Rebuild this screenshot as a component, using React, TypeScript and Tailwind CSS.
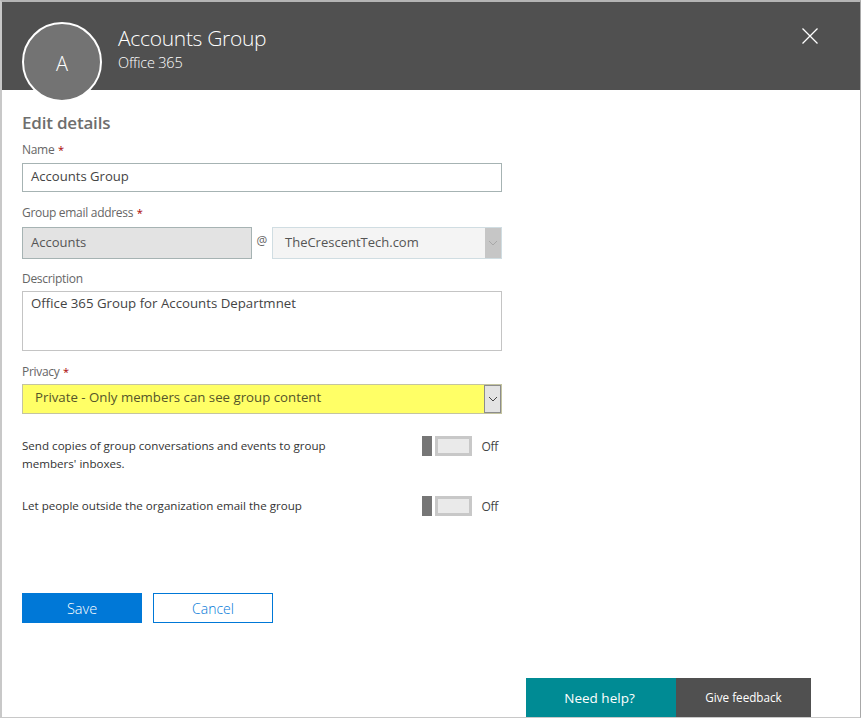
import React from "react";

function Label({ children, req }: { children: React.ReactNode; req?: boolean }) {
  return (
    <div className="text-[12px] leading-[16px] tracking-[-0.3px] text-[#666666]">
      {children}
      {req && <span className="ml-[1px] text-[#a80000] text-[11px]"> *</span>}
    </div>
  );
}

function Chevron({ color }: { color: string }) {
  return (
    <svg width="10" height="6" viewBox="0 0 10 6" fill="none">
      <path d="M1 1l4 4 4-4" stroke={color} strokeWidth="1" />
    </svg>
  );
}

function Toggle() {
  return (
    <div className="flex items-center mr-[4px]">
      <div className="w-[10px] h-[20px] bg-[#767676]" />
      <div className="ml-[3px] w-[37px] h-[20px] border-[3px] border-[#c8c8c8] bg-[#eaeaea]" />
      <span className="ml-[9px] h-[20px] leading-[22px] text-[12px] tracking-[-0.3px] text-[#444444]">Off</span>
    </div>
  );
}

export default function App() {
  return (
    <div className="w-[861px] h-[718px] bg-white overflow-hidden border-t-2 border-t-[#b4b4b4] border-l-2 border-l-[#c8c8c8] border-r border-r-[#a8a8a8] border-b border-b-[#c8c8c8] flex flex-col font-['Open_Sans','Noto_Sans',sans-serif]">
      <header className="h-[88px] shrink-0 bg-[#505050] flex items-start pl-[20px] pr-[42px] text-white">
        <div className="mt-[20px] w-[80px] h-[80px] shrink-0 rounded-full border-2 border-white bg-[#737373] flex items-center justify-center pt-[3px] text-[20px] font-light relative z-10">
          A
        </div>
        <div className="ml-[16px] mt-[21px] flex-1">
          <div className="text-[21px] leading-[30px] font-light tracking-[-0.3px]">Accounts Group</div>
          <div className="mt-[1px] text-[14.5px] leading-[18px] font-light tracking-[-0.2px]">Office 365</div>
        </div>
        <svg className="mt-[26px]" width="16" height="16" viewBox="0 0 16 16" fill="none">
          <path d="M0.5 0.5l15 15M15.5 0.5l-15 15" stroke="#ffffff" strokeWidth="1.3" />
        </svg>
      </header>

      <main className="flex-1 flex flex-col pl-[20px] relative">
        <form className="w-[480px] flex flex-col">
          <h1 className="mt-[21px] text-[17px] leading-[24px] font-semibold text-[#6e6e6e] tracking-[-0.2px]">Edit details</h1>

          <div className="mt-[7px]"><Label req>Name</Label></div>
          <div className="mt-[5px] h-[29px] border border-[#a6b3b3] pl-[8px] pb-[2px] flex items-center text-[13.1px] text-[#444444]">
            Accounts Group
          </div>

          <div className="mt-[13px]"><Label req>Group email address</Label></div>
          <div className="mt-[6px] flex h-[32px]">
            <div className="w-[230px] bg-[#e3e3e3] border border-[#a6b3b3] pl-[8px] flex items-center text-[13px] text-[#555555]">
              Accounts
            </div>
            <div className="w-[20px] text-center text-[12px] leading-[28px] text-[#666666]">@</div>
            <div className="flex-1 bg-[#f4f4f4] border border-[#d0dde2] pl-[12px] flex items-center justify-between text-[13px] text-[#555555]">
              TheCrescentTech.com
              <div className="w-[16px] h-[30px] bg-[#c6c6c6] flex items-center justify-center">
                <Chevron color="#a8a8a8" />
              </div>
            </div>
          </div>

          <div className="mt-[12px]"><Label>Description</Label></div>
          <div className="mt-[4px] h-[60px] border border-[#c4c4c4] pl-[8px] pt-[2px] text-[13.25px] leading-[18px] text-[#444444]">
            Office 365 Group for Accounts Departmnet
          </div>

          <div className="mt-[13px]"><Label req>Privacy</Label></div>
          <div className="mt-[4px] h-[30px] bg-[#ffff66] border border-[#c4c4a0] pl-[12px] flex items-center justify-between text-[13.25px] text-[#55552a]">
            <span className="pb-[2px]">Private - Only members can see group content</span>
            <div className="w-[17px] h-[28px] bg-[#e3e3e3] border border-[#8c8c8c] flex items-center justify-center">
              <Chevron color="#444444" />
            </div>
          </div>

          <div className="mt-[22px] flex justify-between items-start">
            <div className="w-[320px] pt-[1px] text-[11.6px] leading-[18px] text-[#333333]">
              Send copies of group conversations and events to group members' inboxes.
            </div>
            <Toggle />
          </div>

          <div className="mt-[23px] flex justify-between items-start">
            <div className="w-[320px] pt-[1px] text-[11.6px] leading-[18px] text-[#333333]">
              Let people outside the organization email the group
            </div>
            <Toggle />
          </div>

          <div className="mt-[77px] flex gap-[11px]">
            <button type="button" className="w-[120px] h-[30px] bg-[#0078d7] text-white text-[14.5px] font-light pt-[1px]">Save</button>
            <button type="button" className="w-[120px] h-[30px] border border-[#0078d7] text-[#0078d7] text-[14px] font-light">Cancel</button>
          </div>
        </form>

        <div className="mt-auto ml-[504px] flex h-[39px]">
          <div className="w-[150px] bg-[#008b94] text-white text-[13.5px] pr-[3px] pt-[1px] flex items-center justify-center">Need help?</div>
          <div className="w-[135px] bg-[#505050] text-white text-[11.7px] flex items-center justify-center">Give feedback</div>
        </div>
      </main>
    </div>
  );
}
